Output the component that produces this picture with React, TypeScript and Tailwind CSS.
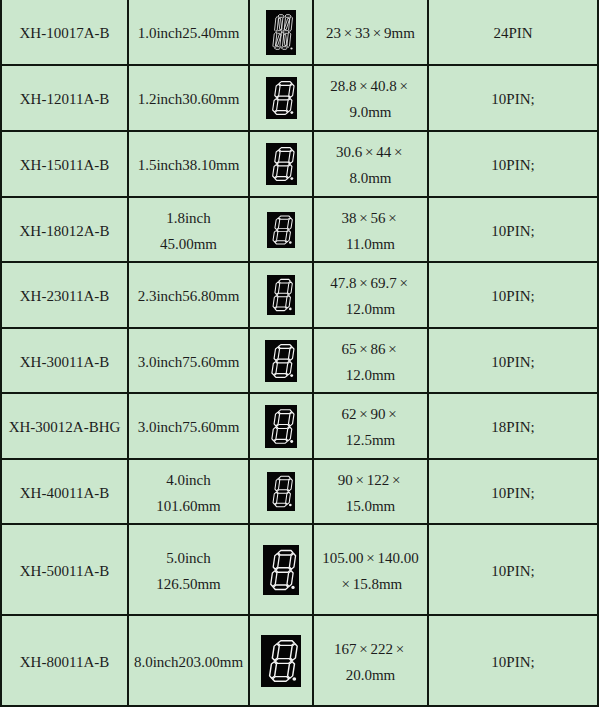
import React from "react";

type Pt = [number, number];

function hSeg(yc: number, x1: number, x2: number, t: number): string {
  const h = t / 2;
  return `${x1},${yc} ${x1 + h},${yc - h} ${x2 - h},${yc - h} ${x2},${yc} ${x2 - h},${yc + h} ${x1 + h},${yc + h}`;
}

function vSeg(xc: number, y1: number, y2: number, t: number): string {
  const h = t / 2;
  return `${xc},${y1} ${xc + h},${y1 + h} ${xc + h},${y2 - h} ${xc},${y2} ${xc - h},${y2 - h} ${xc - h},${y1 + h}`;
}

function dSeg(p1: Pt, p2: Pt, w: number): string {
  const dx = p2[0] - p1[0];
  const dy = p2[1] - p1[1];
  const len = Math.sqrt(dx * dx + dy * dy);
  const nx = (-dy / len) * (w / 2);
  const ny = (dx / len) * (w / 2);
  return `${p1[0] + nx},${p1[1] + ny} ${p2[0] + nx},${p2[1] + ny} ${p2[0] - nx},${p2[1] - ny} ${p1[0] - nx},${p1[1] - ny}`;
}

function SevenSeg({ w, h }: { w: number; h: number }) {
  const xl = 8;
  const xr = 21.5;
  const yt = 6.5;
  const ym = 21;
  const yb = 35.5;
  const t = 3.8;
  const g = 0.6;
  const segs = [
    hSeg(yt, xl + g, xr - g, t),
    hSeg(ym, xl + g, xr - g, t),
    hSeg(yb, xl + g, xr - g, t),
    vSeg(xl, yt + g, ym - g, t),
    vSeg(xr, yt + g, ym - g, t),
    vSeg(xl, ym + g, yb - g, t),
    vSeg(xr, ym + g, yb - g, t),
  ];
  return (
    <svg width={w} height={h} viewBox="0 0 30 42" preserveAspectRatio="none" className="block">
      <rect x="0" y="0" width="30" height="42" fill="#050505" />
      <g transform="translate(5,0) skewX(-8)" fill="none" stroke="#f4f4f4" strokeWidth="1.1" strokeLinejoin="round">
        {segs.map((p, i) => (
          <polygon key={i} points={p} />
        ))}
      </g>
      <circle cx="25" cy="35.6" r="1.4" fill="#f4f4f4" />
    </svg>
  );
}

function SixteenSeg({ w, h }: { w: number; h: number }) {
  const xl = 8;
  const xr = 22;
  const xm = 15;
  const yt = 6;
  const ym = 22;
  const yb = 38;
  const t = 2.6;
  const g = 0.6;
  const segs = [
    hSeg(yt, xl + g, xm - g, t),
    hSeg(yt, xm + g, xr - g, t),
    hSeg(ym, xl + g, xm - g, t),
    hSeg(ym, xm + g, xr - g, t),
    hSeg(yb, xl + g, xm - g, t),
    hSeg(yb, xm + g, xr - g, t),
    vSeg(xl, yt + g, ym - g, t),
    vSeg(xr, yt + g, ym - g, t),
    vSeg(xl, ym + g, yb - g, t),
    vSeg(xr, ym + g, yb - g, t),
    vSeg(xm, yt + g, ym - g, t),
    vSeg(xm, ym + g, yb - g, t),
    dSeg([xl + 2.4, yt + 2.6], [xm - 2.2, ym - 2.6], 2),
    dSeg([xr - 2.4, yt + 2.6], [xm + 2.2, ym - 2.6], 2),
    dSeg([xl + 2.4, yb - 2.6], [xm - 2.2, ym + 2.6], 2),
    dSeg([xr - 2.4, yb - 2.6], [xm + 2.2, ym + 2.6], 2),
  ];
  return (
    <svg width={w} height={h} viewBox="0 0 30 45" preserveAspectRatio="none" className="block">
      <rect x="0" y="0" width="30" height="45" fill="#050505" />
      <g transform="translate(4,0) skewX(-6)" fill="none" stroke="#e8e8e8" strokeWidth="0.85" strokeLinejoin="round">
        {segs.map((p, i) => (
          <polygon key={i} points={p} />
        ))}
      </g>
      <circle cx="25.5" cy="38.5" r="1.1" fill="#e8e8e8" />
    </svg>
  );
}

function X() {
  return <span className="inline-block w-[14px] text-center">×</span>;
}

type Row = {
  model: string;
  size: React.ReactNode;
  disp: React.ReactNode;
  dims: React.ReactNode;
  pins: string;
};

const rows: Row[] = [
  {
    model: "XH-10017A-B",
    size: "1.0inch25.40mm",
    disp: <SixteenSeg w={30} h={45} />,
    dims: (
      <>
        23<X />33<X />9mm
      </>
    ),
    pins: "24PIN",
  },
  {
    model: "XH-12011A-B",
    size: "1.2inch30.60mm",
    disp: <SevenSeg w={31} h={42} />,
    dims: (
      <>
        28.8<X />40.8<X />
        <br />
        9.0mm
      </>
    ),
    pins: "10PIN;",
  },
  {
    model: "XH-15011A-B",
    size: "1.5inch38.10mm",
    disp: <SevenSeg w={31} h={42} />,
    dims: (
      <>
        30.6<X />44<X />
        <br />
        8.0mm
      </>
    ),
    pins: "10PIN;",
  },
  {
    model: "XH-18012A-B",
    size: (
      <>
        1.8inch
        <br />
        45.00mm
      </>
    ),
    disp: <SevenSeg w={28} h={36} />,
    dims: (
      <>
        38<X />56<X />
        <br />
        11.0mm
      </>
    ),
    pins: "10PIN;",
  },
  {
    model: "XH-23011A-B",
    size: "2.3inch56.80mm",
    disp: <SevenSeg w={28} h={40} />,
    dims: (
      <>
        47.8<X />69.7<X />
        <br />
        12.0mm
      </>
    ),
    pins: "10PIN;",
  },
  {
    model: "XH-30011A-B",
    size: "3.0inch75.60mm",
    disp: <SevenSeg w={32} h={42} />,
    dims: (
      <>
        65<X />86<X />
        <br />
        12.0mm
      </>
    ),
    pins: "10PIN;",
  },
  {
    model: "XH-30012A-BHG",
    size: "3.0inch75.60mm",
    disp: <SevenSeg w={32} h={43} />,
    dims: (
      <>
        62<X />90<X />
        <br />
        12.5mm
      </>
    ),
    pins: "18PIN;",
  },
  {
    model: "XH-40011A-B",
    size: (
      <>
        4.0inch
        <br />
        101.60mm
      </>
    ),
    disp: <SevenSeg w={28} h={39} />,
    dims: (
      <>
        90<X />122<X />
        <br />
        15.0mm
      </>
    ),
    pins: "10PIN;",
  },
  {
    model: "XH-50011A-B",
    size: (
      <>
        5.0inch
        <br />
        126.50mm
      </>
    ),
    disp: <SevenSeg w={36} h={50} />,
    dims: (
      <>
        105.00<X />140.00
        <br />
        <X />15.8mm
      </>
    ),
    pins: "10PIN;",
  },
  {
    model: "XH-80011A-B",
    size: "8.0inch203.00mm",
    disp: <SevenSeg w={40} h={52} />,
    dims: (
      <>
        167<X />222<X />
        <br />
        20.0mm
      </>
    ),
    pins: "10PIN;",
  },
];

export default function App() {
  const cell =
    "bg-[#cbe7cd] flex items-center justify-center text-center whitespace-nowrap pt-[2px]";
  return (
    <div
      className="w-[600px] h-[709px] bg-white overflow-hidden text-[15px] leading-[26px] text-[#1c1c1c]"
      style={{ fontFamily: '"Liberation Serif", "Noto Sans CJK SC", serif' }}
    >
      <div className="grid w-[599px] grid-cols-[125px_119px_62px_113px_168px] grid-rows-[64px_64px_64px_63px_64px_63px_64px_63px_89px_89px] gap-[2px] bg-[#101810] px-[2px] pb-[2px]">
        {rows.map((r, i) => (
          <React.Fragment key={i}>
            <div className={cell}>{r.model}</div>
            <div className={cell}>
              <div>{r.size}</div>
            </div>
            <div className="bg-[#cbe7cd] flex items-center justify-center">{r.disp}</div>
            <div className={cell}>
              <div>{r.dims}</div>
            </div>
            <div className={cell}>{r.pins}</div>
          </React.Fragment>
        ))}
      </div>
    </div>
  );
}
